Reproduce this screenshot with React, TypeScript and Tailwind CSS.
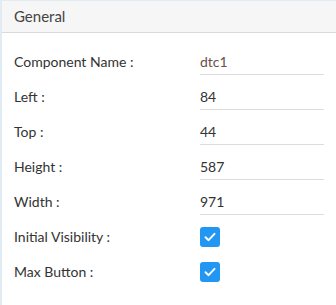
import React from "react";

const rows: { label: string; value?: string; check?: boolean; muted?: boolean }[] = [
  { label: "Component Name :", value: "dtc1", muted: true },
  { label: "Left :", value: "84" },
  { label: "Top :", value: "44" },
  { label: "Height :", value: "587" },
  { label: "Width :", value: "971" },
  { label: "Initial Visibility :", check: true },
  { label: "Max Button :", check: true },
];

function Check() {
  return (
    <div className="w-[20px] h-[20px] rounded-[3px] bg-[#2196f3] flex items-center justify-center">
      <svg width="14" height="14" viewBox="0 0 14 14" fill="none">
        <path d="M2.5 7.2 L5.6 10.2 L11.5 3.8" stroke="white" strokeWidth="1.9" strokeLinecap="round" strokeLinejoin="round" />
      </svg>
    </div>
  );
}

export default function App() {
  return (
    <div
      className="w-[336px] h-[305px] bg-white border-l-2 border-t border-[#e1ebf4] text-[#333]"
      style={{ fontFamily: "Lato, 'Noto Sans', sans-serif" }}
    >
      <div className="h-[32px] bg-[#f6f6f6] border-b border-[#d9d9d9] flex items-center px-[12px] text-[15px] text-[#444]">
        General
      </div>
      <div className="pt-[7px]">
        {rows.map((r) => (
          <div key={r.label} className="h-[35px] flex items-end">
            <div className="w-[198px] pl-[12px] h-[27px] flex items-center text-[14px] text-[#333]">
              {r.label}
            </div>
            {r.check ? (
              <div className="h-[27px] flex items-center">
                <Check />
              </div>
            ) : (
              <div
                className={`w-[124px] h-[27px] flex items-center border-b border-[#dcdcdc] text-[14px] ${
                  r.muted ? "text-[#6b4f4a]" : "text-[#333]"
                }`}
              >
                {r.value}
              </div>
            )}
          </div>
        ))}
      </div>
    </div>
  );
}
